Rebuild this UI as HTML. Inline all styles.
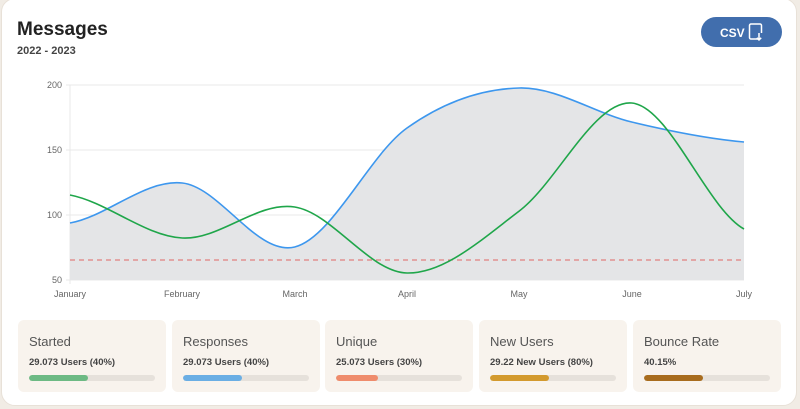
<!DOCTYPE html><html><head><style>
body{margin:0;width:800px;height:409px;background:#f1ece5;font-family:"Liberation Sans",sans-serif;overflow:hidden;position:relative}
.card{position:absolute;left:1px;top:-2px;width:796px;height:408px;background:#fff;border-radius:14px;border:1px solid #e8e1d8;box-sizing:border-box}
h1{position:absolute;left:17px;top:19px;margin:0;font-size:19px;font-weight:700;color:#222}
.sub{position:absolute;left:17px;top:45px;font-size:11px;font-weight:700;color:#444}
.btn{position:absolute;left:701px;top:17px;width:81px;height:30px;background:#416ead;border-radius:15px;color:#fff;font-size:12px;font-weight:700}
.s{position:absolute;top:320px;width:148px;height:72px;background:#f8f3ed;border-radius:6px}
.s .t{position:absolute;left:11px;top:14px;font-size:13px;color:#555}
.s .v{position:absolute;left:11px;top:37px;font-size:9.5px;font-weight:700;color:#444}
.s .b{position:absolute;left:11px;top:55px;width:126px;height:6px;border-radius:3px;background:#e6e1db;overflow:hidden}
.s .b i{display:block;height:100%;border-radius:3px}
</style></head><body>
<div class="card"></div>
<h1>Messages</h1><div class="sub">2022 - 2023</div>
<div class="btn"><span style="position:absolute;left:19px;top:9px">CSV</span>
<svg style="position:absolute;left:46px;top:5px" width="18" height="20" viewBox="0 0 18 20" fill="none" stroke="#fff" stroke-width="1.5"><path d="M13 17H4a1.5 1.5 0 0 1-1.5-1.5v-12A1.5 1.5 0 0 1 4 2h9a1.5 1.5 0 0 1 1.5 1.5V11"/><path d="M12 11v7M9.8 15.8L12 18l2.2-2.2"/></svg></div>
<svg style="position:absolute;left:0;top:0" width="800" height="300" font-family="Liberation Sans" font-size="9" fill="#666">
<g stroke="#e8e8e8" stroke-width="1"><line x1="66" y1="85" x2="744" y2="85"/><line x1="66" y1="150" x2="744" y2="150"/><line x1="66" y1="215" x2="744" y2="215"/><line x1="66" y1="280" x2="744" y2="280"/><line x1="70" y1="85" x2="70" y2="284"/></g>
<text x="62" y="88" text-anchor="end">200</text><text x="62" y="153" text-anchor="end">150</text><text x="62" y="218" text-anchor="end">100</text><text x="62" y="283" text-anchor="end">50</text>
<g text-anchor="middle"><text x="70" y="297">January</text><text x="182" y="297">February</text><text x="295" y="297">March</text><text x="407" y="297">April</text><text x="519" y="297">May</text><text x="632" y="297">June</text><text x="744" y="297">July</text></g>
<path d="M70,223 C107.4,216.3 144.9,179 182.3,183 C219.7,187 257.3,256.2 294.7,247 C332.1,237.8 369.6,154.5 407,128 C444.4,101.5 481.9,89 519.3,88 C556.7,87 594.3,113 631.7,122 C669.1,131 706.6,138.7 744,142 L744,280 L70,280Z" fill="#e4e5e7"/>
<line x1="70" y1="260" x2="744" y2="260" stroke="#e06666" stroke-width="1" stroke-dasharray="5,4"/>
<path d="M70,223 C107.4,216.3 144.9,179 182.3,183 C219.7,187 257.3,256.2 294.7,247 C332.1,237.8 369.6,154.5 407,128 C444.4,101.5 481.9,89 519.3,88 C556.7,87 594.3,113 631.7,122 C669.1,131 706.6,138.7 744,142" fill="none" stroke="#3d97ee" stroke-width="1.6"/>
<path d="M70,195 C107.4,202.2 144.9,236 182.3,238 C219.7,240 257.3,201.2 294.7,207 C332.1,212.8 369.6,272.3 407,273 C444.4,273.7 481.9,239.3 519.3,211 C556.7,182.7 594.3,100 631.7,103 C669.1,106 706.6,208 744,229" fill="none" stroke="#1fa64a" stroke-width="1.6"/>
</svg>
<div class="s" style="left:18px"><div class="t">Started</div><div class="v">29.073 Users (40%)</div><div class="b"><i style="width:47%;background:#6dba84"></i></div></div>
<div class="s" style="left:172px"><div class="t">Responses</div><div class="v">29.073 Users (40%)</div><div class="b"><i style="width:47%;background:#6aaee4"></i></div></div>
<div class="s" style="left:325px"><div class="t">Unique</div><div class="v">25.073 Users (30%)</div><div class="b"><i style="width:33%;background:#ef8c6c"></i></div></div>
<div class="s" style="left:479px"><div class="t">New Users</div><div class="v">29.22 New Users (80%)</div><div class="b"><i style="width:47%;background:#d39a2e"></i></div></div>
<div class="s" style="left:633px"><div class="t">Bounce Rate</div><div class="v">40.15%</div><div class="b"><i style="width:47%;background:#a86c1e"></i></div></div>
</body></html>
